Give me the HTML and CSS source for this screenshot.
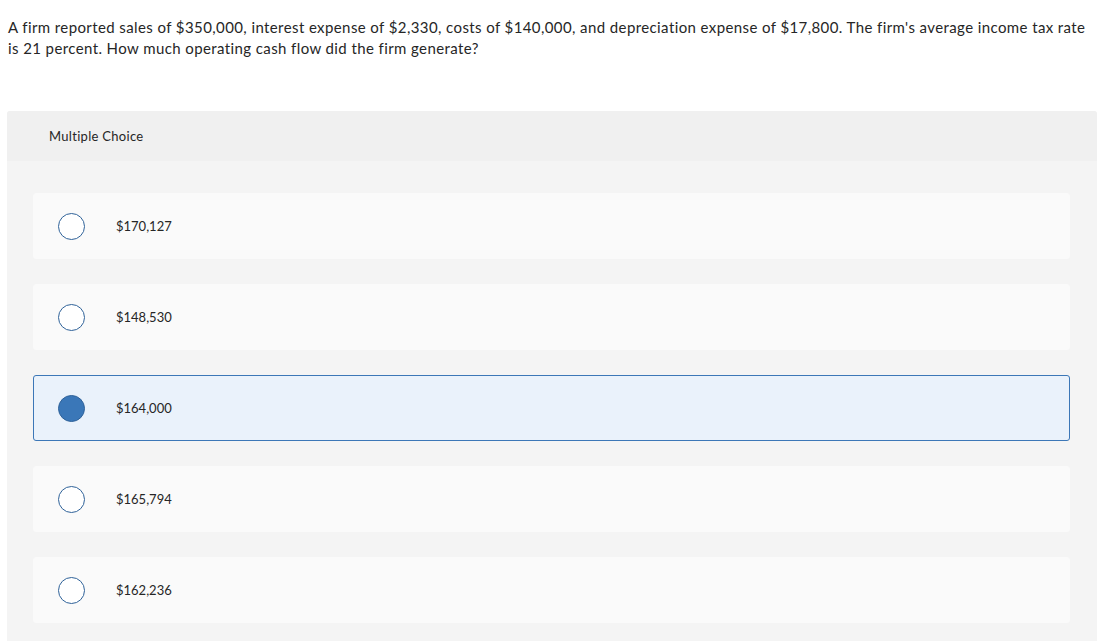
FILE: index.html
```html
<!DOCTYPE html>
<html>
  <head>
    <meta name="viewport" content="width=device-width, initial-scale=1.0" />
    <title>Multiple Choice</title>
    <link rel="stylesheet" href="styles.css">
  </head>
  <body>
    <p class="question">
      A firm reported sales of $350,000, interest expense of $2,330, costs of $140,000, and depreciation expense of $17,800. The firm's average income tax rate is 21 percent. How much operating cash flow did the firm generate?
    </p>

    <div class="choice-panel">
      <div class="choice-header">Multiple Choice</div>

      <div class="choice-list">
        <div class="choice">
          <span class="radio"></span>
          <span class="choice-label">$170,127</span>
        </div>
        <div class="choice">
          <span class="radio"></span>
          <span class="choice-label">$148,530</span>
        </div>
        <div class="choice selected">
          <span class="radio"></span>
          <span class="choice-label">$164,000</span>
        </div>
        <div class="choice">
          <span class="radio"></span>
          <span class="choice-label">$165,794</span>
        </div>
        <div class="choice">
          <span class="radio"></span>
          <span class="choice-label">$162,236</span>
        </div>
      </div>
    </div>
  </body>
</html>
```

FILE: styles.css
```css
body,
html {
  margin: 0;
  padding: 0;
  background: #ffffff;
  color: #262626;
  font-family: "Lato", "Open Sans", sans-serif;
  font-variant-ligatures: none;
}

.question {
  margin: 17px 8px 0 8px;
  font-size: 15px;
  line-height: 21px;
  letter-spacing: 0.4px;
}

.choice-panel {
  margin: 52px 4px 0 7px;
  background: #f4f4f4;
  border-radius: 3px;
  padding-bottom: 40px;
}

.choice-header {
  height: 50px;
  padding-left: 42px;
  display: flex;
  align-items: center;
  background: #f0f0f0;
  border-radius: 3px 3px 0 0;
  font-size: 13px;
  letter-spacing: 0.3px;
}

.choice-list {
  display: flex;
  flex-direction: column;
  gap: 25px;
  padding: 32px 27px 0 26px;
}

.choice {
  height: 64px;
  display: flex;
  align-items: center;
  gap: 31px;
  padding-left: 24px;
  background: #fafafa;
  border: 1px solid #fafafa;
  border-radius: 3px;
  font-size: 13px;
}

.radio {
  width: 25px;
  height: 25px;
  border: 1.5px solid #2f6299;
  border-radius: 50%;
  background: #ffffff;
}

/* Picked answer */
.choice.selected {
  background: #eaf2fb;
  border-color: #3c77b7;
}

.choice.selected .radio {
  background: #3a77b8;
  border-color: #2f6299;
}
```
